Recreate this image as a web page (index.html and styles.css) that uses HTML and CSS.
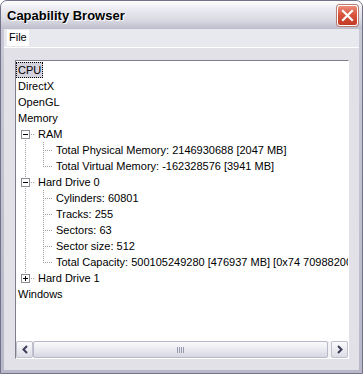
FILE: index.html
```html
<!DOCTYPE html>
<html>
<head>
<meta charset="utf-8">
<link rel="stylesheet" href="styles.css">
</head>
<body>
<div class="window">
  <div class="titlebar">
    <span class="title">Capability Browser</span>
    <span class="close"><svg width="13" height="13" viewBox="0 0 13 13"><path d="M2 2L11 11M11 2L2 11" stroke="#fff" stroke-width="2.2" stroke-linecap="square"/></svg></span>
  </div>
  <div class="frame">
    <div class="menubar"><span class="menu-item">File</span></div>
    <div class="client">
      <div class="tree">
        <div class="rows">
          <div class="row"><span class="label selected">CPU</span></div>
          <div class="row"><span class="label">DirectX</span></div>
          <div class="row"><span class="label">OpenGL</span></div>
          <div class="row"><span class="label">Memory</span></div>
          <div class="row"><span class="cell box-first"><span class="tbox"></span></span><span class="label child">RAM</span></div>
          <div class="row"><span class="cell vline"></span><span class="cell tee"></span><span class="label child">Total Physical Memory: 2146930688 [2047 MB]</span></div>
          <div class="row"><span class="cell vline"></span><span class="cell elbow"></span><span class="label child">Total Virtual Memory: -162328576 [3941 MB]</span></div>
          <div class="row"><span class="cell box-mid"><span class="tbox"></span></span><span class="label child">Hard Drive 0</span></div>
          <div class="row"><span class="cell vline"></span><span class="cell tee"></span><span class="label child">Cylinders: 60801</span></div>
          <div class="row"><span class="cell vline"></span><span class="cell tee"></span><span class="label child">Tracks: 255</span></div>
          <div class="row"><span class="cell vline"></span><span class="cell tee"></span><span class="label child">Sectors: 63</span></div>
          <div class="row"><span class="cell vline"></span><span class="cell tee"></span><span class="label child">Sector size: 512</span></div>
          <div class="row"><span class="cell vline"></span><span class="cell elbow"></span><span class="label child">Total Capacity: 500105249280 [476937 MB] [0x74 70988200]</span></div>
          <div class="row"><span class="cell box-last"><span class="tbox plus"></span></span><span class="label child">Hard Drive 1</span></div>
          <div class="row"><span class="label">Windows</span></div>
        </div>
        <div class="hscroll">
          <span class="sbtn"><svg width="8" height="9" viewBox="0 0 8 9"><path d="M6 1L2.5 4.5L6 8" fill="none" stroke="#3c3c5a" stroke-width="2"/></svg></span>
          <span class="track"><span class="thumb"><span class="grip"></span></span></span>
          <span class="sbtn"><svg width="8" height="9" viewBox="0 0 8 9"><path d="M2 1L5.5 4.5L2 8" fill="none" stroke="#3c3c5a" stroke-width="2"/></svg></span>
        </div>
      </div>
    </div>
  </div>
</div>
</body>
</html>
```

FILE: styles.css
```css
html, body {
  margin: 0;
  padding: 0;
  background: #ffffff;
}
.window {
  width: 363px;
  height: 374px;
  box-sizing: border-box;
  border: 1px solid #72728a;
  border-radius: 7px 7px 0 0;
  display: flex;
  flex-direction: column;
  overflow: hidden;
  background: #c8c8d6;
  font-family: "Liberation Sans", Arial, sans-serif;
}
.titlebar {
  height: 28px;
  flex: none;
  display: flex;
  align-items: center;
  justify-content: space-between;
  padding: 0 4px 0 6px;
  background: linear-gradient(to bottom, #fdfdfe 0%, #ebebf1 30%, #d8d8e2 70%, #bdbdcc 100%);
}
.title {
  font-weight: bold;
  font-size: 13px;
  color: #000;
  text-shadow: 1px 1px 0 #ffffff;
}
.close {
  width: 19px;
  height: 19px;
  border: 1px solid #ffffff;
  border-radius: 3px;
  display: flex;
  align-items: center;
  justify-content: center;
  background: linear-gradient(to bottom, #ec8f7d 0%, #d9533d 45%, #c13a25 100%);
  box-shadow: 0 0 0 1px #b77b70;
}
.frame {
  flex: 1;
  display: flex;
  flex-direction: column;
  padding: 0 3px 3px 3px;
  background: linear-gradient(to bottom, #c9c9d6, #b8b8c8);
}
.menubar {
  height: 18px;
  flex: none;
  display: flex;
  align-items: center;
  padding-left: 3px;
  background: #e8e8ef;
  border-bottom: 1px solid #ffffff;
}
.menu-item {
  font-size: 11px;
  background: #ffffff;
  padding: 1px 2px 2px 2px;
  line-height: 13px;
}
.client {
  flex: 1;
  display: flex;
  padding: 12px 10px 11px 11px;
  background: #e2e1e8;
}
.tree {
  flex: 1;
  display: flex;
  flex-direction: column;
  border: 1px solid #7f7f8c;
  border-right-color: #ffffff;
  border-bottom-color: #ffffff;
  background: #ffffff;
  overflow: hidden;
}
.rows {
  flex: 1;
  padding-top: 1px;
  overflow: hidden;
}
.row {
  height: 16px;
  display: flex;
  align-items: center;
  white-space: nowrap;
}
.label {
  font-size: 11px;
  line-height: 14px;
  padding: 0 2px;
  color: #000;
}
.label.child {
  margin-left: 2px;
}
.label.selected {
  background: #d4d2dc;
  outline: 1px dotted #000;
  outline-offset: -1px;
  line-height: 16px;
}
.cell {
  width: 18px;
  height: 16px;
  flex: none;
  display: flex;
  align-items: flex-start;
  --dv: repeating-linear-gradient(to bottom, #a0a0a0 0 1px, transparent 1px 2px);
  --dh: repeating-linear-gradient(to right, #a0a0a0 0 1px, transparent 1px 2px);
}
.vline {
  background: var(--dv) 9px 0 / 1px 100% no-repeat;
}
.tee {
  background: var(--dv) 9px 0 / 1px 100% no-repeat, var(--dh) 9px 8px / 9px 1px no-repeat;
}
.elbow {
  background: var(--dv) 9px 0 / 1px 9px no-repeat, var(--dh) 9px 8px / 9px 1px no-repeat;
}
.box-first {
  background: var(--dv) 9px 8px / 1px 8px no-repeat, var(--dh) 9px 8px / 9px 1px no-repeat;
}
.box-mid {
  background: var(--dv) 9px 0 / 1px 100% no-repeat, var(--dh) 9px 8px / 9px 1px no-repeat;
}
.box-last {
  background: var(--dv) 9px 0 / 1px 9px no-repeat, var(--dh) 9px 8px / 9px 1px no-repeat;
}
.tbox {
  width: 7px;
  height: 7px;
  margin: 4px 0 0 5px;
  border: 1px solid #8d8d96;
  background: linear-gradient(#000, #000) center / 5px 1px no-repeat, #ffffff;
}
.tbox.plus {
  background: linear-gradient(#000, #000) center / 5px 1px no-repeat, linear-gradient(#000, #000) center / 1px 5px no-repeat, #ffffff;
}
.hscroll {
  height: 17px;
  flex: none;
  display: flex;
  background: #f3f3f6;
}
.sbtn {
  width: 15px;
  height: 15px;
  flex: none;
  border: 1px solid #c0c0cf;
  border-radius: 2px;
  display: flex;
  align-items: center;
  justify-content: center;
  background: linear-gradient(to bottom, #fbfbfd, #dcdce6);
}
.track {
  flex: 1;
  display: flex;
  padding: 0 3px 0 0;
}
.thumb {
  flex: 1;
  border: 1px solid #b8b8c8;
  border-radius: 2px;
  display: flex;
  align-items: center;
  justify-content: center;
  background: linear-gradient(to bottom, #fafafc, #e6e6ee 60%, #d6d6e2);
}
.grip {
  width: 7px;
  height: 6px;
  background: repeating-linear-gradient(to right, #9a9aae 0 1px, transparent 1px 2px);
}
```
